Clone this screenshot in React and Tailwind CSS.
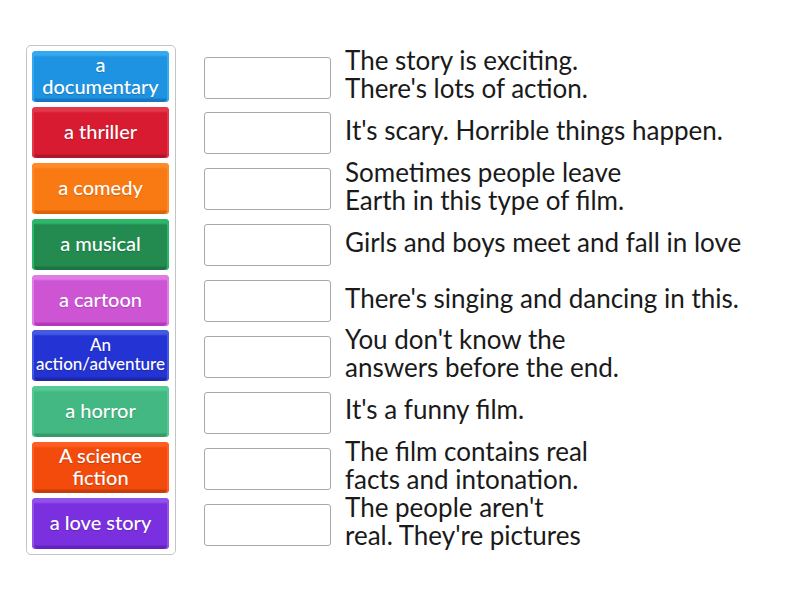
import React from "react";

const tiles = [
  { lines: ["a", "documentary"], light: "#36a8ef", main: "#1e93e2", dark: "#1877c3", size: "text-[20px] leading-[22px]" },
  { lines: ["a thriller"], light: "#e3384c", main: "#d81b31", dark: "#b0162a", size: "text-[20px] leading-[22px]" },
  { lines: ["a comedy"], light: "#ff8b28", main: "#f97a12", dark: "#d9640b", size: "text-[20px] leading-[22px]" },
  { lines: ["a musical"], light: "#2db768", main: "#238b50", dark: "#1c7442", size: "text-[20px] leading-[22px]" },
  { lines: ["a cartoon"], light: "#df7ce5", main: "#cd55d4", dark: "#b33aba", size: "text-[20px] leading-[22px]" },
  { lines: ["An", "action/adventure"], light: "#4659e2", main: "#2434d4", dark: "#1c28a8", size: "text-[17px] leading-[19px]" },
  { lines: ["a horror"], light: "#55ca95", main: "#43b883", dark: "#379a6d", size: "text-[20px] leading-[22px]" },
  { lines: ["A science", "fiction"], light: "#ff5d22", main: "#f24b0c", dark: "#c83c08", size: "text-[20px] leading-[22px]" },
  { lines: ["a love story"], light: "#9152eb", main: "#7a30df", dark: "#6224bd", size: "text-[20px] leading-[22px]" },
];

const clues = [
  ["The story is exciting.", "There's lots of action."],
  ["It's scary. Horrible things happen."],
  ["Sometimes people leave", "Earth in this type of film."],
  ["Girls and boys meet and fall in love"],
  ["There's singing and dancing in this."],
  ["You don't know the", "answers before the end."],
  ["It's a funny film."],
  ["The film contains real", "facts and intonation."],
  ["The people aren't", "real. They're pictures"],
];

function Tile({ t }) {
  return (
    <div
      className={`h-[51px] w-[137px] rounded-[4px] flex flex-col items-center justify-center pb-[3px] text-white ${t.size} font-medium text-center`}
      style={{
        background: `linear-gradient(to bottom, ${t.light} 0px, ${t.light} 4px, ${t.main} 6px, ${t.main} 47px, ${t.dark} 48px, ${t.dark} 51px)`,
        boxShadow: `inset 2px 0 0 ${t.light}, inset -2px 0 0 ${t.light}`,
        textShadow: "0 1px 1px rgba(0,0,0,0.2)",
      }}
    >
      {t.lines.map((l, i) => (
        <span key={i} className="block">{l}</span>
      ))}
    </div>
  );
}

export default function App() {
  return (
    <div
      className="w-[800px] h-[600px] bg-white flex items-start pt-[45px] pl-[26px]"
      style={{ fontFamily: "Lato, 'Open Sans', sans-serif" }}
    >
      <div className="w-[150px] h-[510px] border border-[#c4c4c4] rounded-[5px] p-[5px] flex flex-col gap-[4.875px]">
        {tiles.map((t, i) => (
          <Tile key={i} t={t} />
        ))}
      </div>
      <div className="ml-[28px] pt-[6px] flex flex-col gap-[4.875px]">
        {clues.map((c, i) => (
          <div key={i} className="h-[51px] flex items-center">
            <div className="w-[127px] h-[42px] border border-[#a9a9a9] rounded-[3px] bg-white shrink-0 mt-[2px]" />
            <div className="ml-[14px] text-[26px] leading-[28px] text-[#1a1a1a] whitespace-nowrap -mt-[5px]">
              {c.map((l, j) => (
                <div key={j}>{l}</div>
              ))}
            </div>
          </div>
        ))}
      </div>
    </div>
  );
}
